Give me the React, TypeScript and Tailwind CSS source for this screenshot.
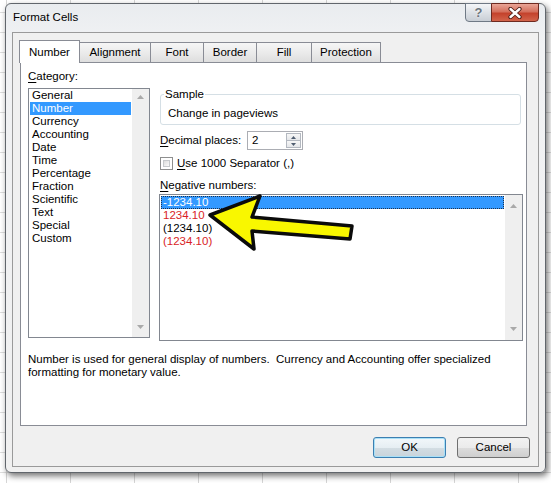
import React from 'react';

const CATEGORIES = [
  'General', 'Number', 'Currency', 'Accounting', 'Date', 'Time',
  'Percentage', 'Fraction', 'Scientific', 'Text', 'Special', 'Custom',
];

const NEGATIVES = [
  { label: '-1234.10', red: false },
  { label: '1234.10', red: true },
  { label: '(1234.10)', red: false },
  { label: '(1234.10)', red: true },
];

const TABS = [
  { label: 'Number', width: 'w-[61px]' },
  { label: 'Alignment', width: 'w-[72px]' },
  { label: 'Font', width: 'w-[54px]' },
  { label: 'Border', width: 'w-[54px]' },
  { label: 'Fill', width: 'w-[56px]' },
  { label: 'Protection', width: 'w-[70px]' },
];

// disabled-looking scrollbar with the two tiny arrows
const Scrollbar = ({ pad }: { pad: string }) => (
  <div className={`w-[17px] h-full flex flex-col justify-between items-center bg-[#efefef] ${pad}`}>
    <svg width="7" height="4" viewBox="0 0 7 4">
      <path d="M0 4 L3.5 0 L7 4 Z" fill="#a9a9a9" />
    </svg>
    <svg width="7" height="4" viewBox="0 0 7 4">
      <path d="M0 0 L3.5 4 L7 0 Z" fill="#a9a9a9" />
    </svg>
  </div>
);

const TitleButtons = () => (
  <div className="flex -mt-px">
    <div className="w-[27px] h-[19px] flex items-center justify-center rounded-bl-[4px] border border-[#6f7985] bg-[linear-gradient(to_bottom,#f4f6f8,#dde1e6_50%,#c8ced5)]">
      <span className="text-[13px] font-bold leading-none text-[#6b747d] [text-shadow:0_0_2px_#fff]">?</span>
    </div>
    <div className="w-[48px] h-[19px] -ml-px flex items-center justify-center rounded-br-[4px] border border-[#6e2a20] bg-[linear-gradient(to_bottom,#e9a596,#d4705d_45%,#c4422c_55%,#d2644b)]">
      <svg width="14" height="12" viewBox="0 0 14 12">
        <path d="M2.5 2 L11.5 10 M11.5 2 L2.5 10" stroke="#4a1b14" strokeWidth="4.2" strokeLinecap="round" />
        <path d="M2.5 2 L11.5 10 M11.5 2 L2.5 10" stroke="#ffffff" strokeWidth="2.4" strokeLinecap="round" />
      </svg>
    </div>
  </div>
);

const Underlined = ({ first, rest }: { first: string; rest: string }) => (
  <span>
    <span className="underline underline-offset-2">{first}</span>
    {rest}
  </span>
);

const Spinner = () => (
  <div className="w-[15px] h-full flex flex-col">
    <div className="flex-1 flex items-center justify-center border border-[#b3b8c0] bg-[linear-gradient(to_bottom,#f7f7f7,#e4e6e9)]">
      <svg width="5" height="3" viewBox="0 0 5 3">
        <path d="M0 3 L2.5 0 L5 3 Z" fill="#4f5d70" />
      </svg>
    </div>
    <div className="flex-1 -mt-px flex items-center justify-center border border-[#b3b8c0] bg-[linear-gradient(to_bottom,#f7f7f7,#e4e6e9)]">
      <svg width="5" height="3" viewBox="0 0 5 3">
        <path d="M0 0 L2.5 3 L5 0 Z" fill="#4f5d70" />
      </svg>
    </div>
  </div>
);

const Arrow = () => (
  <svg className="absolute inset-0 pointer-events-none" width="551" height="483" viewBox="0 0 551 483">
    <path
      d="M210 215 L260 196 L252 217 L352 226 L350 239 L252 231 L254 249 Z"
      fill="#f9f700"
      stroke="#0b0b0b"
      strokeWidth="3.5"
      strokeLinejoin="round"
    />
  </svg>
);

export default function App() {
  return (
    <div className="relative w-[551px] h-[483px] overflow-hidden pt-[3px] pl-[5px] bg-white bg-[linear-gradient(to_right,#d6d6d6_1px,transparent_1px),linear-gradient(to_bottom,#dedede_1px,transparent_1px)] [background-size:64px_20px] [background-position:6px_12px] font-['Liberation_Sans',Arial,sans-serif] text-[11.5px] leading-[13px] text-black">
      <div className="w-[541px] h-[470px] flex flex-col rounded-[6px] border border-[#61666c] bg-[linear-gradient(to_bottom,#e9ecef,#f1f2f4_40px,#f0f0f0)] shadow-[2px_3px_6px_rgba(0,0,0,0.55)]">
        {/* title bar */}
        <div className="h-[28px] flex justify-between items-start pr-[6px]">
          <div className="pl-[7px] pt-[7px] text-black">Format Cells</div>
          <TitleButtons />
        </div>

        {/* client area */}
        <div className="flex-1 mx-[6px] mb-[5px] flex flex-col border border-[#9a9a9a] bg-[#f0f0f0]">
          <div className="relative z-10 -mb-px flex items-end pl-[6px] pt-[7px]">
            {TABS.map((t, i) =>
              i === 0 ? (
                <div key={t.label} className={`${t.width} h-[23px] flex items-center justify-center border-x border-t border-[#898c95] bg-white`}>
                  {t.label}
                </div>
              ) : (
                <div key={t.label} className={`${t.width} h-[21px] -ml-px flex items-center justify-center border border-[#898c95] bg-[linear-gradient(to_bottom,#f6f6f6,#ebebeb_50%,#dedede)]`}>
                  {t.label}
                </div>
              )
            )}
          </div>

          {/* tab panel */}
          <div className="ml-[7px] w-[507px] h-[364px] border border-[#898c95] bg-white pt-[7px] pl-[7px]">
            <div className="flex items-start gap-[9px]">
              {/* category column */}
              <div className="w-[122px] flex flex-col">
                <Underlined first="C" rest="ategory:" />
                <div className="mt-[5px] h-[250px] flex border border-[#828790] bg-white">
                  <div className="flex-1 px-[1px]">
                    {CATEGORIES.map((c) => (
                      <div key={c} className={`h-[13px] pl-[2px] ${c === 'Number' ? 'bg-[#3399ff] text-white' : ''}`}>
                        {c}
                      </div>
                    ))}
                  </div>
                  <Scrollbar pad="pt-[6px] pb-[8px]" />
                </div>
              </div>

              {/* options column */}
              <div className="w-[364px] mt-[18px] flex flex-col">
                <fieldset className="ml-[1px] w-[361px] h-[37px] rounded-[3px] border border-[#d5dfe5] pl-[7px]">
                  <legend className="-ml-[4px] px-[1px]">Sample</legend>
                  <div className="pt-[6px]">Change in pageviews</div>
                </fieldset>

                <div className="mt-[6px] ml-[1px] h-[19px] flex items-center">
                  <div className="w-[87px]">
                    <Underlined first="D" rest="ecimal places:" />
                  </div>
                  <div className="w-[56px] h-[19px] flex items-center justify-between border border-[#abadb3] bg-white pl-[4px] pr-px py-px">
                    <span>2</span>
                    <Spinner />
                  </div>
                </div>

                <div className="mt-[7px] ml-[1px] h-[13px] flex items-center gap-[4px]">
                  <div className="w-[13px] h-[13px] border border-[#8e8f8f] bg-white p-[2px]">
                    <div className="w-full h-full border border-[#c6c9cc] bg-[linear-gradient(135deg,#dcdcdc,#fbfbfb)]" />
                  </div>
                  <Underlined first="U" rest="se 1000 Separator (,)" />
                </div>

                <div className="mt-[9px] ml-[1px]">
                  <Underlined first="N" rest="egative numbers:" />
                </div>
                <div className="mt-[2px] w-[364px] h-[147px] flex border border-[#828790] bg-white">
                  <div className="flex-1 px-[1px] pt-[1px]">
                    {NEGATIVES.map((n, i) => (
                      <div
                        key={i}
                        className={`h-[13px] pl-[2px] ${
                          i === 0
                            ? 'bg-[#3399ff] text-white outline-1 outline-dotted outline-[#20324a] -outline-offset-1'
                            : n.red
                            ? 'text-[#d91e26]'
                            : ''
                        }`}
                      >
                        {n.label}
                      </div>
                    ))}
                  </div>
                  <Scrollbar pad="pt-[9px] pb-[9px]" />
                </div>
              </div>
            </div>

            <p className="mt-[12px]">
              Number is used for general display of numbers.&nbsp; Currency and Accounting offer specialized
              <br />
              formatting for monetary value.
            </p>
          </div>

          {/* dialog buttons */}
          <div className="mt-[11px] flex justify-end gap-[11px] pr-[8px]">
            <button className="w-[73px] h-[21px] rounded-[3px] border border-[#3c7fb1] bg-[linear-gradient(to_bottom,#f2f7fa,#e6eef3_50%,#d3dde3_51%,#c9d4db)] shadow-[inset_0_0_0_1px_#a9e0f7]">
              OK
            </button>
            <button className="w-[73px] h-[21px] rounded-[3px] border border-[#707070] bg-[linear-gradient(to_bottom,#f2f2f2,#ebebeb_50%,#dddddd_51%,#cfcfcf)]">
              Cancel
            </button>
          </div>
        </div>
      </div>
      <Arrow />
    </div>
  );
}
